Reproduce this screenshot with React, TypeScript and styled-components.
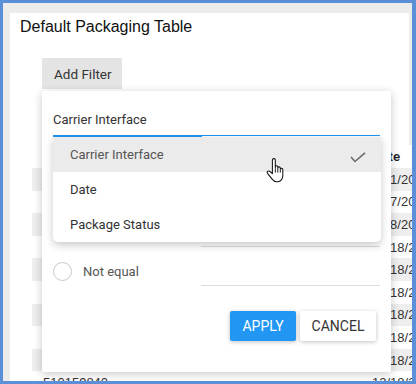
import React from "react";
import styled, { createGlobalStyle } from "styled-components";

const Global = createGlobalStyle`
  html, body { margin: 0; padding: 0; background: #fff; }
  * { box-sizing: border-box; }
`;

const Frame = styled.div`
  width: 416px;
  height: 384px;
  border: solid #5b8fd8;
  border-width: 3px 4px 3px 3px;
  background: #ececec;
  padding: 10px 3px 0 7px;
  overflow: hidden;
`;

const Card = styled.div`
  position: relative;
  height: 100%;
  background: #fff;
  padding-top: 5px;
`;

const Title = styled.h1`
  margin: 0 0 0 10px;
  font: 400 16px/18px "Liberation Sans", Arial, sans-serif;
  color: #111;
`;

const Toolbar = styled.div`
  margin-top: 22px;
  padding-left: 32px;
  display: flex;
`;

const GrayButton = styled.button`
  width: 80px;
  height: 31px;
  border: none;
  border-radius: 0;
  background: #e4e4e4;
  color: #333;
  font: 400 13.5px Roboto, sans-serif;
  padding: 0 0 0 12px;
  text-align: left;
  white-space: nowrap;
`;

const Table = styled.div`
  margin: 56px 0 0 22px;
  width: 380px;
`;

const Row = styled.div<{ $striped?: boolean; $head?: boolean }>`
  display: grid;
  grid-template-columns: 340px 1fr;
  height: ${(p) => (p.$head ? "23px" : "22.6px")};
  align-items: center;
  background: ${(p) => (p.$striped ? "#eeeeee" : "#fff")};
  font: ${(p) => (p.$head ? 700 : 400)} 13px "Liberation Sans", Arial, sans-serif;
  color: ${(p) => (p.$head ? "#222" : "#333")};
  white-space: nowrap;
  overflow: hidden;
`;

const Cell = styled.div`
  padding-left: 11px;
  overflow: hidden;
`;

const DateCell = styled.div`
  overflow: hidden;
`;

const Popup = styled.div`
  position: absolute;
  left: 32px;
  top: 78px;
  width: 349px;
  height: 281px;
  background: #fff;
  border-radius: 2px;
  box-shadow: 0 2px 10px rgba(0, 0, 0, 0.22);
  padding: 21px 11px 0;
  font-family: Roboto, sans-serif;
`;

const Field = styled.div`
  position: relative;
  font: 400 13px/16px Roboto, sans-serif;
  color: #333;
  padding-bottom: 7px;
  border-bottom: 1px solid #2196f3;
  &::after {
    content: "";
    position: absolute;
    left: 0;
    bottom: -2px;
    width: 149px;
    height: 2px;
    background: #2196f3;
  }
`;

const Menu = styled.ul`
  position: absolute;
  top: 46px;
  left: 11px;
  width: 328px;
  margin: 0;
  padding: 0;
  list-style: none;
  background: #fff;
  border-radius: 0 0 5px 5px;
  box-shadow: 0 3px 8px rgba(0, 0, 0, 0.22);
  z-index: 2;
`;

const MenuItem = styled.li<{ $active?: boolean }>`
  position: relative;
  height: 35px;
  display: flex;
  align-items: center;
  padding: 0 15px 0 17px;
  font: 400 13px Roboto, sans-serif;
  color: ${(p) => (p.$active ? "#555" : "#333")};
  background: ${(p) => (p.$active ? "#ebebeb" : "transparent")};
`;

const Check = styled.svg`
  margin-left: auto;
  margin-top: 6px;
`;

const Cursor = styled.svg`
  position: absolute;
  left: 212px;
  top: 21px;
`;

const Options = styled.div`
  margin-top: 81px;
  display: flex;
  flex-direction: column;
  gap: 9px;
`;

const OptionRow = styled.div`
  display: flex;
  align-items: center;
  height: 30px;
`;

const Radio = styled.span`
  width: 19px;
  height: 19px;
  border-radius: 50%;
  border: 1.5px solid #c9c9c9;
  margin-right: 11px;
  flex: none;
`;

const OptionLabel = styled.span`
  font: 400 13px Roboto, sans-serif;
  color: #555;
`;

const ValueLine = styled.div`
  margin-left: auto;
  width: 179px;
  align-self: stretch;
  border-bottom: 1px solid #dcdcdc;
`;

const Actions = styled.div`
  display: flex;
  justify-content: flex-end;
  gap: 4px;
  margin-top: 25px;
  padding-right: 4px;
`;

const ActionButton = styled.button<{ $primary?: boolean; $w: number }>`
  width: ${(p) => p.$w}px;
  height: 30px;
  border: none;
  border-radius: 2px;
  font: 400 14px Roboto, sans-serif;
  padding: 0;
  color: ${(p) => (p.$primary ? "#fff" : "#333")};
  background: ${(p) => (p.$primary ? "#2196f3" : "#fff")};
  box-shadow: 0 1px 4px rgba(0, 0, 0, 0.25);
`;

const dates = [
  "12/1/2018",
  "12/7/2018",
  "12/8/2018",
  "12/18/2018",
  "12/18/2018",
  "12/18/2018",
  "12/18/2018",
  "12/18/2018",
  "12/18/2018",
  "12/18/2018",
];

export default function App() {
  return (
    <>
      <Global />
      <Frame>
        <Card>
          <Title>Default Packaging Table</Title>
          <Toolbar>
            <GrayButton>Add Filter</GrayButton>
          </Toolbar>
          <Table>
            <Row $head>
              <Cell>Tracking Number</Cell>
              <DateCell>Date</DateCell>
            </Row>
            {dates.map((d, i) => (
              <Row key={i} $striped={i % 2 === 0 && i < 9}>
                <Cell>{i === 9 ? "510159840" : `5101598${30 + i}`}</Cell>
                <DateCell>{d}</DateCell>
              </Row>
            ))}
          </Table>
          <Popup>
            <Field>Carrier Interface</Field>
            <Menu>
              <MenuItem $active>
                Carrier Interface
                <Check width="16" height="11" viewBox="0 0 16 11">
                  <polyline points="1,5 5,9.5 15,0.8" fill="none" stroke="#6a6a6a" strokeWidth="1.6" />
                </Check>
                <Cursor width="20" height="25" viewBox="0 0 18 24">
                  <path
                    d="M6.5 12.5 V2 a1.4 1.4 0 0 1 2.8 0 V9.5 V8.7 a1.2 1.2 0 0 1 2.4 0 V10 V9.7 a1.2 1.2 0 0 1 2.4 0 V11 a1.2 1.2 0 0 1 2.4 0 V17 c0 3-2 5.8-5 5.8 H10.5 c-2 0-3.2-1-4.5-2.7 L1.8 14.8 c-.6-.8-.4-1.8.4-2.2 c.8-.4 1.6-.1 2.2.6 L6.5 15 Z"
                    fill="#fff"
                    stroke="#111"
                    strokeWidth="1"
                    strokeLinejoin="round"
                  />
                  <path d="M9.3 10 V14 M11.7 10.5 V14 M14.1 11.5 V14" stroke="#111" strokeWidth="0.9" />
                </Cursor>
              </MenuItem>
              <MenuItem>Date</MenuItem>
              <MenuItem>Package Status</MenuItem>
            </Menu>
            <Options>
              <OptionRow>
                <Radio />
                <OptionLabel>Equal</OptionLabel>
                <ValueLine />
              </OptionRow>
              <OptionRow>
                <Radio />
                <OptionLabel>Not equal</OptionLabel>
                <ValueLine />
              </OptionRow>
            </Options>
            <Actions>
              <ActionButton $primary $w={66}>APPLY</ActionButton>
              <ActionButton $w={76}>CANCEL</ActionButton>
            </Actions>
          </Popup>
        </Card>
      </Frame>
    </>
  );
}
